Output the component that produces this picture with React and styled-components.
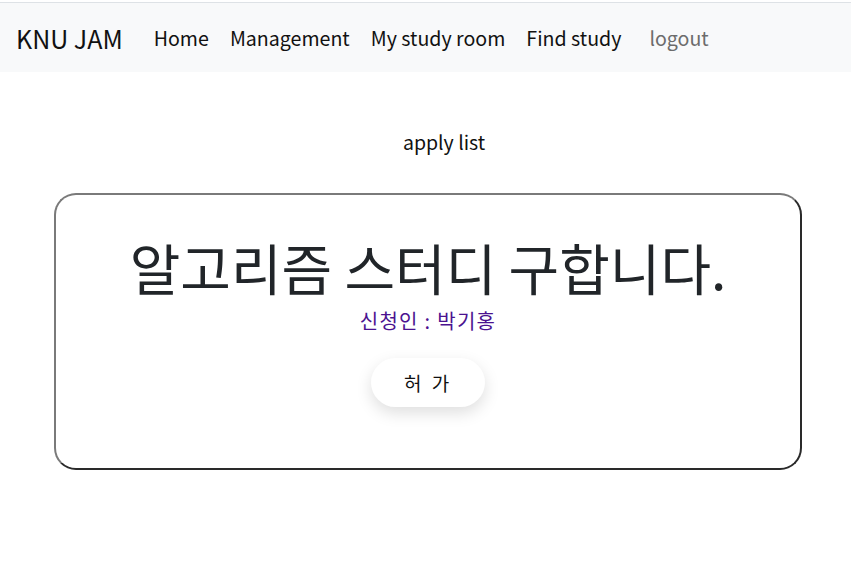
import React from "react";
import styled, { createGlobalStyle } from "styled-components";

const GlobalStyle = createGlobalStyle`
  body {
    margin: 0;
    background: #fff;
    font-family: "Noto Sans CJK KR", "Noto Sans", sans-serif;
    color: #212529;
  }
`;

const Page = styled.div`
  padding-top: 2px;
`;

const Navbar = styled.nav`
  display: flex;
  align-items: center;
  height: 69px;
  border-top: 1px solid #dee2e6;
  background: #f8f9fa;
  padding-left: 16px;
`;

const Brand = styled.span`
  font-size: 25px;
  color: #111;
  margin-right: 31px;
`;

const NavLinks = styled.div`
  display: flex;
  align-items: center;
  gap: 21px;
`;

const NavLink = styled.span`
  font-size: 19.6px;
  color: ${(p) => (p.muted ? "#6c6c6c" : "#111")};
  margin-left: ${(p) => (p.muted ? "7px" : "0")};
`;

const Main = styled.main`
  display: flex;
  flex-direction: column;
  padding-top: 54px;
`;

const ListTitle = styled.div`
  text-align: center;
  padding-left: 37px;
  font-size: 19.5px;
  color: #111;
  height: 32px;
  line-height: 32px;
`;

const Card = styled.section`
  margin: 35px 0 0 54px;
  width: 748px;
  height: 277px;
  box-sizing: border-box;
  border: 2px solid;
  border-color: #7a7a7a #2a2a2a #2a2a2a #7a7a7a;
  border-radius: 22px;
  display: flex;
  flex-direction: column;
  align-items: center;
  padding-top: 31px;
`;

const Title = styled.h1`
  margin: 0;
  font-size: 55px;
  font-weight: 400;
  line-height: 80px;
  color: #212529;
`;

const Applicant = styled.div`
  font-size: 20px;
  letter-spacing: 1.3px;
  color: #4b1290;
  line-height: 30px;
`;

const ApproveButton = styled.button`
  margin-top: 22px;
  width: 114px;
  height: 49px;
  border: none;
  border-radius: 25px;
  background: #fff;
  box-shadow: 0 6px 16px rgba(0, 0, 0, 0.13);
  font-family: inherit;
  font-size: 19px;
  color: #111;
  letter-spacing: 3px;
  cursor: pointer;
`;

const links = ["Home", "Management", "My study room", "Find study"];

export default function App() {
  return (
    <Page>
      <GlobalStyle />
      <Navbar>
        <Brand>KNU JAM</Brand>
        <NavLinks>
          {links.map((l) => (
            <NavLink key={l}>{l}</NavLink>
          ))}
          <NavLink muted>logout</NavLink>
        </NavLinks>
      </Navbar>
      <Main>
        <ListTitle>apply list</ListTitle>
        <Card>
          <Title>알고리즘 스터디 구합니다.</Title>
          <Applicant>신청인 : 박기홍</Applicant>
          <ApproveButton>허 가</ApproveButton>
        </Card>
      </Main>
    </Page>
  );
}
